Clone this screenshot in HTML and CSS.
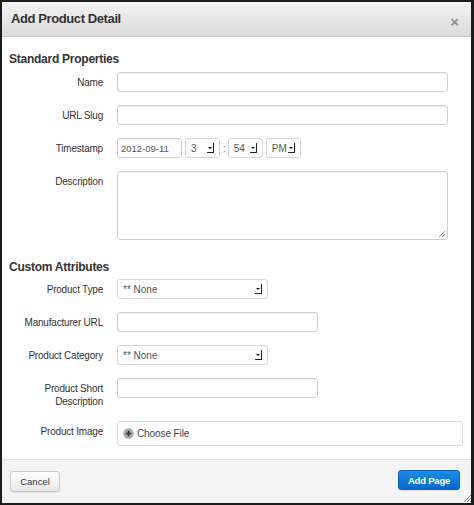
FILE: index.html
```html
<!DOCTYPE html>
<html>
<head>
<meta charset="utf-8">
<title>Add Product Detail</title>
<link rel="stylesheet" href="styles.css">
</head>
<body>
<div class="modal">
  <div class="modal-header">
    <h3 class="title">Add Product Detail</h3>
    <span class="close">×</span>
  </div>
  <div class="modal-body">
    <h4 class="section-title">Standard Properties</h4>
    <div class="form-grid">
      <div class="label">Name</div>
      <div class="field"><div class="input w-full"></div></div>

      <div class="label">URL Slug</div>
      <div class="field"><div class="input w-full"></div></div>

      <div class="label">Timestamp</div>
      <div class="field timestamp">
        <div class="input w-date"><span class="value">2012-09-11</span></div>
        <div class="input select w-hour hour"><span class="value">3</span><span class="arrow"></span></div>
        <span class="colon">:</span>
        <div class="input select w-hour"><span class="value">54</span><span class="arrow"></span></div>
        <div class="input select w-hour ampm"><span class="value">PM</span><span class="arrow"></span></div>
      </div>

      <div class="label">Description</div>
      <div class="field">
        <div class="input textarea w-full">
          <svg class="grip" width="7" height="7" viewBox="0 0 7 7"><path d="M1 7 L7 1 M4 7 L7 4" stroke="#888" stroke-width="0.9" fill="none"/></svg>
        </div>
      </div>
    </div>

    <h4 class="section-title second">Custom Attributes</h4>
    <div class="form-grid">
      <div class="label">Product Type</div>
      <div class="field"><div class="input select w-select"><span class="value">** None</span><span class="arrow"></span></div></div>

      <div class="label">Manufacturer URL</div>
      <div class="field"><div class="input w-mid"></div></div>

      <div class="label">Product Category</div>
      <div class="field"><div class="input select w-select"><span class="value">** None</span><span class="arrow"></span></div></div>

      <div class="label">Product Short<br>Description</div>
      <div class="field"><div class="input w-mid"></div></div>

      <div class="label">Product Image</div>
      <div class="field">
        <div class="input file">
          <svg class="plus" width="11" height="11" viewBox="0 0 11 11">
            <circle cx="5.5" cy="5.5" r="5.2" fill="#a9a9a9"/>
            <path d="M5.5 2.8 V8.2 M2.8 5.5 H8.2" stroke="#333" stroke-width="1.6"/>
          </svg>
          <span class="file-text">Choose File</span>
        </div>
      </div>
    </div>
  </div>
  <div class="modal-footer">
    <button class="btn">Cancel</button>
    <button class="btn btn-primary">Add Page</button>
    <svg class="corner-grip" width="8" height="8" viewBox="0 0 8 8"><path d="M1 8 L8 1 M4 8 L8 4 M7 8 L8 7" stroke="#777" stroke-width="0.9" fill="none"/></svg>
  </div>
</div>
</body>
</html>
```

FILE: styles.css
```css
* { box-sizing: border-box; }

html, body {
  margin: 0;
  padding: 0;
}

body {
  width: 474px;
  height: 505px;
  background: #1c1c1c;
  padding: 2px 3px 2px 2px;
  font-family: "Liberation Sans", Arial, sans-serif;
  color: #333;
  overflow: hidden;
}

.modal {
  height: 501px;
  background: #fff;
  display: flex;
  flex-direction: column;
}

.modal-header {
  height: 35px;
  flex: none;
  display: flex;
  align-items: center;
  justify-content: space-between;
  padding: 0 12px 0 9px;
  background: linear-gradient(#f3f3f3, #dbdbdb);
  border-bottom: 1px solid #c9c9c9;
}

.title {
  margin: 0;
  font-size: 13px;
  font-weight: bold;
  letter-spacing: -0.4px;
  color: #333;
  line-height: 16px;
}

.close {
  font-size: 15px;
  font-weight: bold;
  color: #8f8f8f;
  line-height: 15px;
  margin-top: 4px;
}

.modal-body {
  flex: 1;
  padding: 14px 8px 0 7px;
}

.section-title {
  margin: 0 0 5px 0;
  font-size: 12px;
  font-weight: bold;
  letter-spacing: -0.25px;
  line-height: 16px;
  color: #333;
}

.section-title.second {
  margin-top: 19px;
  margin-bottom: 4px;
}

.form-grid {
  display: grid;
  grid-template-columns: 94px 1fr;
  column-gap: 14px;
  row-gap: 13px;
  align-items: start;
}

.label {
  text-align: right;
  font-size: 10px;
  letter-spacing: -0.2px;
  line-height: 13px;
  padding-top: 4px;
  color: #333;
}

.field {
  display: flex;
  align-items: center;
}

.input {
  height: 20px;
  background: #fff;
  border: 1px solid #cfcfcf;
  border-radius: 3px;
  box-shadow: inset 0 1px 1px rgba(0, 0, 0, 0.06);
  display: flex;
  align-items: center;
  font-size: 10px;
  color: #555;
  position: relative;
}

.w-full { width: 331px; }
.w-mid { width: 201px; }
.w-select { width: 151px; }
.w-date { width: 65px; padding-left: 3px; font-size: 9.5px; }
.w-hour { width: 35px; }

.timestamp .input { margin-right: 3px; }
.timestamp .hour { margin-right: 2px; }
.timestamp .colon {
  font-size: 10px;
  color: #777;
  margin: 0 2px 0 1px;
}

.select {
  justify-content: space-between;
  padding: 0 5px 0 5px;
  box-shadow: none;
  border-color: #d6d6d6;
}

.arrow {
  width: 7px;
  height: 10px;
  border-right: 1px solid #222;
  border-bottom: 1px solid #222;
  background: #fff;
  position: relative;
  flex: none;
}

.arrow::after {
  content: "";
  position: absolute;
  left: 1px;
  top: 4px;
  border-left: 2px solid transparent;
  border-right: 2px solid transparent;
  border-top: 2px solid #111;
}

.textarea {
  height: 69px;
}

.grip {
  position: absolute;
  right: 2px;
  bottom: 2px;
}

.file {
  width: 346px;
  height: 25px;
  padding-left: 5px;
  box-shadow: none;
  border-color: #d9d9d9;
}

.plus { margin-right: 3px; flex: none; }

.file-text {
  font-size: 10px;
  letter-spacing: -0.1px;
  color: #444;
}

.modal-footer {
  height: 44px;
  flex: none;
  background: #f4f4f4;
  border-top: 1px solid #e0e0e0;
  display: flex;
  align-items: flex-start;
  justify-content: space-between;
  padding: 11px 11px 0 8px;
  position: relative;
}

.btn {
  font-family: "Liberation Sans", Arial, sans-serif;
  font-size: 9.5px;
  height: 21px;
  width: 50px;
  padding: 0;
  border: 1px solid #c8c8c8;
  border-radius: 3px;
  background: linear-gradient(#ffffff, #e8e8e8);
  color: #333;
  box-shadow: 0 1px 1px rgba(0, 0, 0, 0.08);
}

.btn-primary {
  width: 62px;
  height: 20px;
  margin-top: -1px;
  font-weight: bold;
  letter-spacing: -0.2px;
  color: #fff;
  border-color: #0a5fb8;
  background: linear-gradient(#1a8ee6, #0868cc);
}

.corner-grip {
  position: absolute;
  right: 0;
  bottom: 1px;
}
```
